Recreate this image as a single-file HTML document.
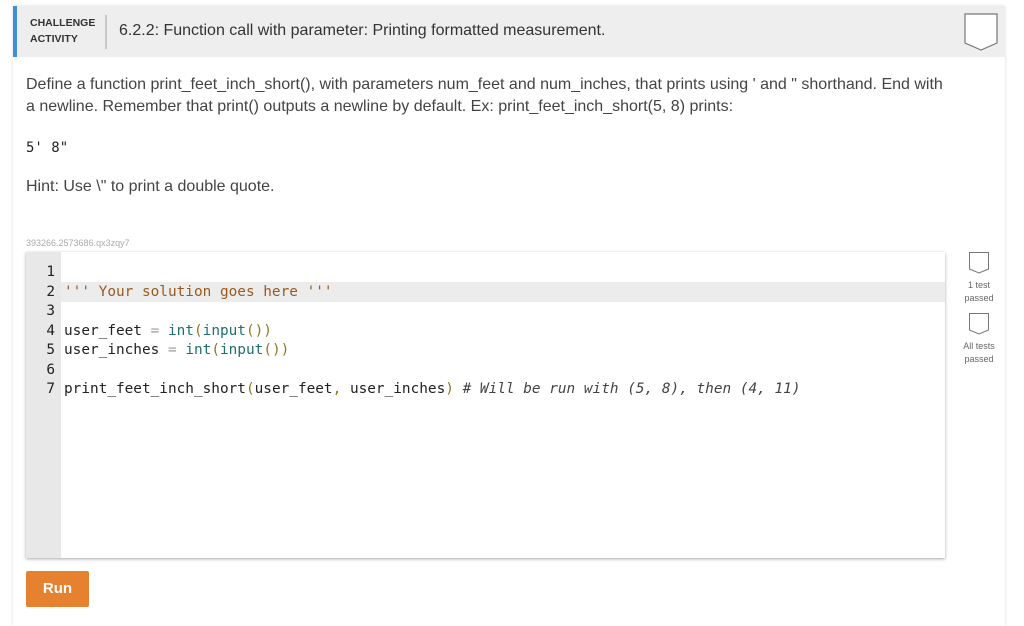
<!DOCTYPE html>
<html><head><style>
body{margin:0;background:#fff;width:1024px;height:615px;overflow:hidden;font-family:"Liberation Sans",sans-serif;}
.card{position:absolute;left:13px;top:6px;width:992px;height:620px;background:#fff;box-shadow:0 0 3px rgba(0,0,0,.15);}
.hdr{position:absolute;left:0;top:0;width:992px;height:51px;background:#eeeeee;border-left:4px solid #3d8fd6;box-sizing:border-box;}
.lbl{position:absolute;left:13px;top:9px;font-size:10.5px;font-weight:bold;color:#333;line-height:16px;}
.sep{position:absolute;left:88px;top:9px;width:2px;height:34px;background:#c8c8c8;}
.ttl{position:absolute;left:102px;top:16px;font-size:16px;color:#333;}
.txt{position:absolute;left:13px;font-size:16px;color:#444;line-height:22px;}
.ed{position:absolute;left:13px;top:246px;width:919px;height:306px;background:#fff;box-shadow:0 1px 3px rgba(0,0,0,.35);}
.gut{position:absolute;left:0;top:0;width:35px;height:306px;background:#e8e8e8;}
.code{position:absolute;left:0;top:11px;font-family:"DejaVu Sans Mono","Liberation Mono",monospace;font-size:14.4px;line-height:19.5px;color:#222;white-space:pre;}
.ln{display:inline-block;width:29px;text-align:right;margin-right:9px;}
.s{color:#9a5a1e}.b{color:#1f6f6f}.p{color:#8a7a20}.c{color:#444;font-style:italic}
.run{position:absolute;left:13px;top:565px;width:63px;height:36px;background:#e6822f;border-radius:2px;color:#fff;font-weight:bold;font-size:15px;text-align:center;line-height:36px;}
.sm{position:absolute;font-size:9px;color:#666;text-align:center;line-height:13px;width:50px;}
</style></head><body>
<div class="card">
<div class="hdr"><div class="lbl">CHALLENGE<br>ACTIVITY</div><div class="sep"></div><div class="ttl">6.2.2: Function call with parameter: Printing formatted measurement.</div>
<svg style="position:absolute;left:947px;top:7px" width="34" height="38"><path d="M1 1H33V30L17 37L1 30Z" fill="#fff" stroke="#777" stroke-width="1.2"/></svg></div>
<div class="txt" style="top:68px">Define a function print_feet_inch_short(), with parameters num_feet and num_inches, that prints using ' and " shorthand. End with<br>a newline. Remember that print() outputs a newline by default. Ex: print_feet_inch_short(5, 8) prints:</div>
<div class="txt" style="top:131px;font-family:'DejaVu Sans Mono',monospace;font-size:14px;color:#222">5' 8"</div>
<div class="txt" style="top:170px">Hint: Use \" to print a double quote.</div>
<div style="position:absolute;left:13px;top:232px;font-size:9px;color:#aaa">393266.2573686.qx3zqy7</div>
<div class="ed"><div class="gut"></div><div style="position:absolute;left:35px;top:30px;width:884px;height:20px;background:#ececec"></div>
<div class="code"><span class="ln">1</span>
<span class="ln">2</span><span class="s">''' Your solution goes here '''</span>
<span class="ln">3</span>
<span class="ln">4</span>user_feet <span style="color:#999">=</span> <span class="b">int</span><span class="p">(</span><span class="b">input</span><span class="p">())</span>
<span class="ln">5</span>user_inches <span style="color:#999">=</span> <span class="b">int</span><span class="p">(</span><span class="b">input</span><span class="p">())</span>
<span class="ln">6</span>
<span class="ln">7</span>print_feet_inch_short<span class="p">(</span>user_feet<span class="p">,</span> user_inches<span class="p">)</span> <span class="c"># Will be run with (5, 8), then (4, 11)</span></div></div>
<svg style="position:absolute;left:956px;top:246px" width="20" height="22"><path d="M.5 .5H19.5V17L10 21L.5 17Z" fill="#fff" stroke="#777"/></svg>
<div class="sm" style="left:941px;top:273px">1 test<br>passed</div>
<svg style="position:absolute;left:956px;top:307px" width="20" height="22"><path d="M.5 .5H19.5V17L10 21L.5 17Z" fill="#fff" stroke="#777"/></svg>
<div class="sm" style="left:941px;top:334px">All tests<br>passed</div>
<div class="run">Run</div>
</div>
</body></html>
